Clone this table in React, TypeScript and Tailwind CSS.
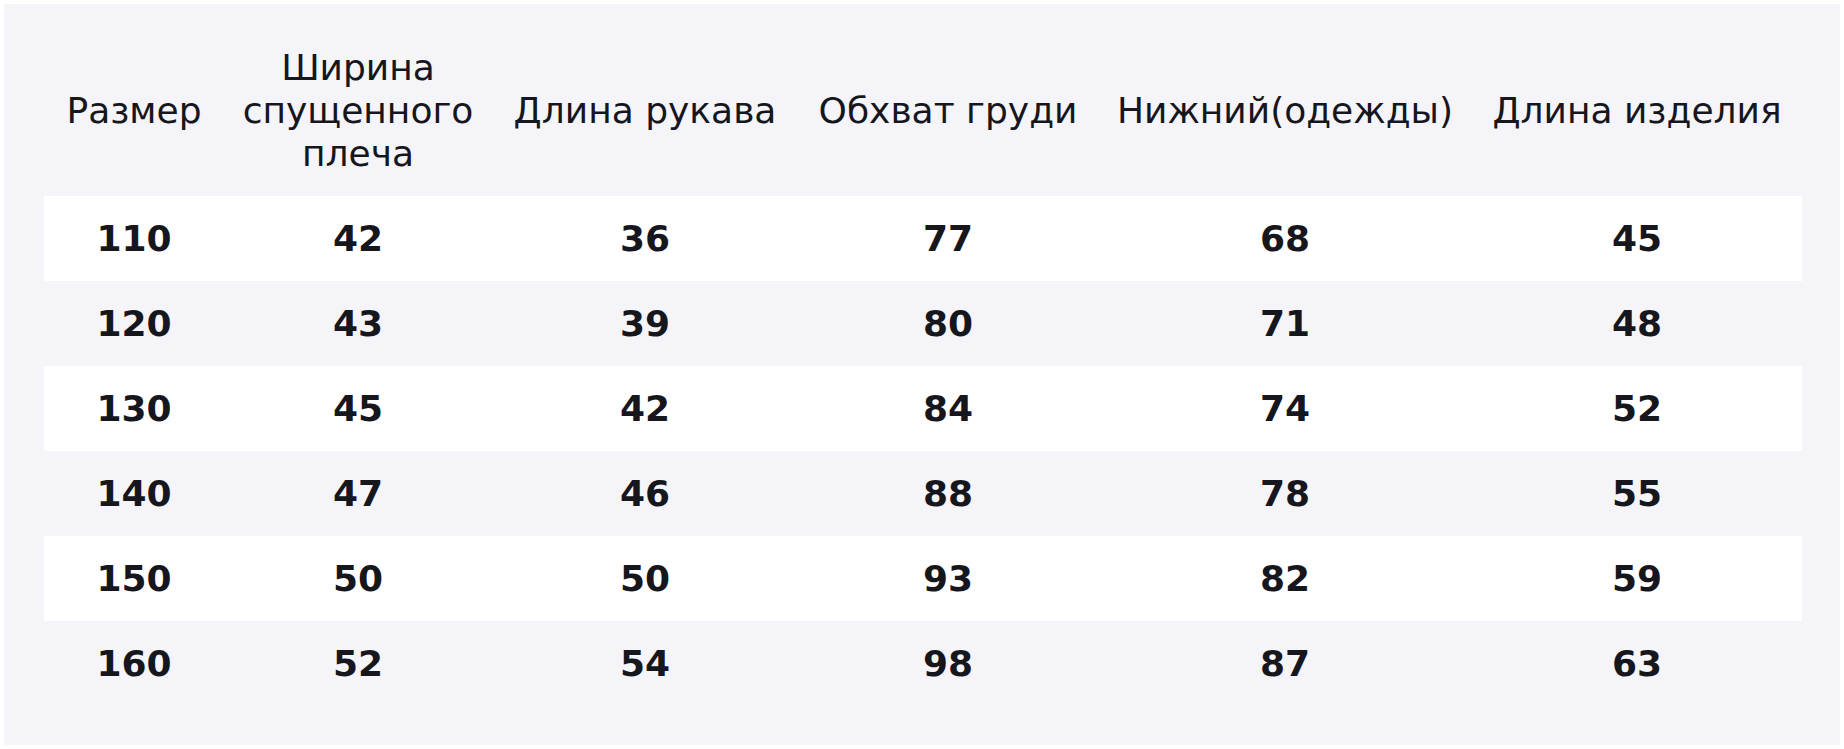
import React from "react";

const headers = [
  "Размер",
  "Ширина спущенного плеча",
  "Длина рукава",
  "Обхват груди",
  "Нижний(одежды)",
  "Длина изделия",
];

const rows = [
  ["110", "42", "36", "77", "68", "45"],
  ["120", "43", "39", "80", "71", "48"],
  ["130", "45", "42", "84", "74", "52"],
  ["140", "47", "46", "88", "78", "55"],
  ["150", "50", "50", "93", "82", "59"],
  ["160", "52", "54", "98", "87", "63"],
];

const widths = ["w-[180px]", "w-[268px]", "w-[306px]", "w-[300px]", "w-[374px]", "w-[330px]"];

export default function App() {
  return (
    <div className="w-[1844px] h-[749px] bg-white p-[4px]" style={{ fontFamily: '"DejaVu Sans", sans-serif' }}>
      <div className="w-[1836px] h-[741px] bg-[#f4f4f9] pl-[40px] pt-[20px]">
        <table className="border-collapse table-fixed w-[1756px] text-[#16161d]">
          <thead>
            <tr className="h-[172px]">
              {headers.map((h, i) => (
                <th
                  key={i}
                  className={`${widths[i]} font-normal text-[36px] leading-[43px] text-center align-middle px-0 whitespace-nowrap`}
                >
                  {h === "Ширина спущенного плеча" ? (
                    <>
                      Ширина
                      <br />
                      спущенного
                      <br />
                      плеча
                    </>
                  ) : (
                    h
                  )}
                </th>
              ))}
            </tr>
          </thead>
          <tbody>
            {rows.map((r, ri) => (
              <tr key={ri} className={`h-[85px] ${ri % 2 === 0 ? "bg-white" : "bg-[#f4f4f9]"}`}>
                {r.map((c, ci) => (
                  <td key={ci} className="text-center align-middle font-bold text-[36px]">
                    {c}
                  </td>
                ))}
              </tr>
            ))}
          </tbody>
        </table>
      </div>
    </div>
  );
}
